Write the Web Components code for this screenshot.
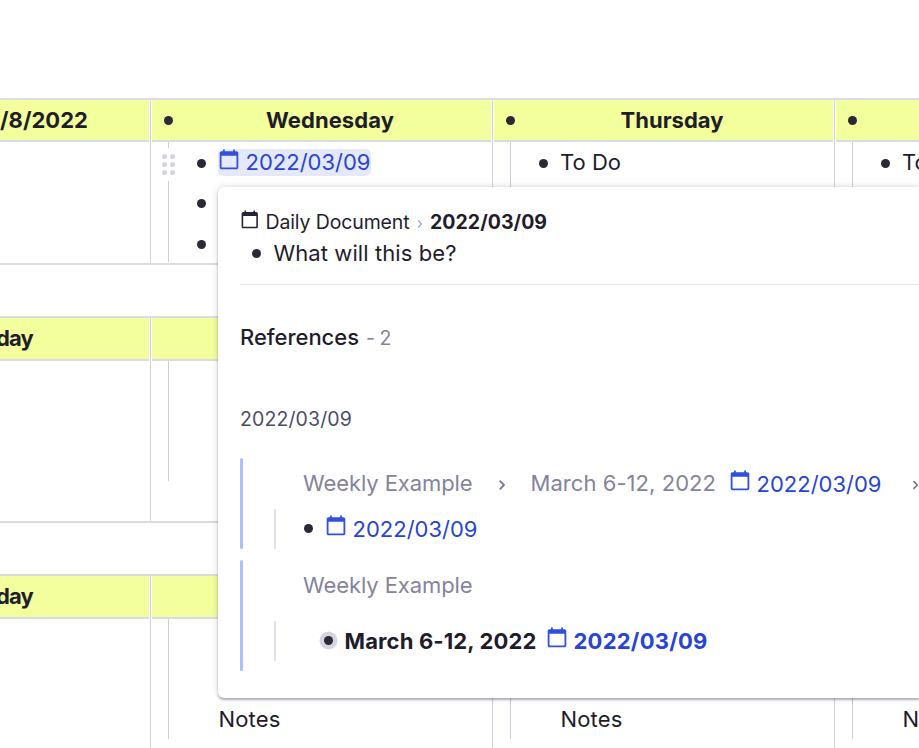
<!DOCTYPE html>
<html lang="en">
<head>
<meta charset="utf-8">
<title>Weekly Example</title>
<style>
html, body { margin: 0; background: #fff; }
body { width: 919px; height: 748px; overflow: hidden; position: relative; font-family: Inter, "Liberation Sans", sans-serif; color: #1f1d2b; }
</style>
</head>
<body>
<week-page></week-page>
<script>
const define = (name, html, setup) => {
  const tpl = document.createElement('template');
  tpl.innerHTML = html;
  customElements.define(name, class extends HTMLElement {
    constructor() {
      super();
      this.attachShadow({ mode: 'open' }).append(tpl.content.cloneNode(true));
    }
    connectedCallback() { if (setup) setup(this); }
  });
};

/* One line of text, tracked so that it fills its "w" width. */
define('text-run', `<style>
:host { display: block; flex: none; white-space: nowrap; font-size: 22px; line-height: 30px; }
:host([small]) { font-size: 19.5px; }
:host([bold]) { font-weight: 700; }
:host([medium]) { font-weight: 500; }
:host([muted]) { color: #85839c; }
:host([link]) { color: #2645d6; }
span { display: inline-block; }
</style><span><slot></slot></span>`, el => {
  const w = +el.getAttribute('w');
  if (!w) return;
  const span = el.shadowRoot.querySelector('span');
  const extra = (w - span.getBoundingClientRect().width) / el.textContent.length;
  span.style.letterSpacing = extra.toFixed(3) + 'px';
});

define('bullet-dot', `<style>
:host { display: block; flex: none; width: 9px; height: 9px; border-radius: 50%; background: #2a2935; }
:host([halo]) { box-shadow: 0 0 0 4.5px #d5d2e2; }
</style>`);

define('calendar-icon', `<style>
:host { display: block; flex: none; width: 20px; height: 21px; color: #2f50dc; }
:host([dark]) { width: 17.5px; height: 19px; color: #262432; }
svg { display: block; width: 100%; height: 100%; }
</style>
<svg viewBox="0 0 20 21" preserveAspectRatio="none"><path fill="currentColor" fill-rule="evenodd" d="M4 .6h1.800v1.700h8.400V.6H16v1.700h1.400c1 0 1.900.8 1.900 1.800v14.300c0 1-.8 1.900-1.900 1.900H2.600c-1 0-1.900-.8-1.900-1.900V4.100c0-1 .8-1.800 1.900-1.800H4zM2.500 6.700v11.200c0 .4.2.6.6.6h13.800c.4 0 .6-.2.6-.6V6.700z"/></svg>`);

define('chevron-sep', `<style>
:host { display: block; flex: none; width: 8px; height: 12px; color: #77758f; }
svg { display: block; width: 100%; height: 100%; }
:host([thin]) { width: 6px; height: 10px; color: #8a88a0; }
:host([thin]) path { stroke-width: 1.4; }
</style><svg viewBox="0 0 8 12"><path d="M1.700 1.600 6 6l-4.300 4.400" fill="none" stroke="currentColor" stroke-width="1.800"/></svg>`);

define('drag-handle', `<style>
:host { position: absolute; left: 8px; top: 48px; width: 19px; height: 33px; background: #fff; display: grid; grid-template-columns: 5px 5px; grid-auto-rows: 5px; gap: 3px; place-content: center; padding-right: 1px; box-sizing: border-box; }
i { border-radius: 50%; background: #d5d3e0; }
</style><i></i><i></i><i></i><i></i><i></i><i></i>`);

define('week-table', `<style>
:host { display: grid; grid-template-columns: 150px 342px 342px 85px; border-top: 2px solid #dbdbe1; border-bottom: 2px solid #dbdbdd; }
</style><slot></slot>`);

define('day-cell', `<style>
:host { display: flex; flex-direction: column; position: relative; border-left: 1px solid #d2d2d8; min-width: 0; height: var(--h); }
:host([first]) { border-left: 0; }
:host([last]) { overflow: hidden; }
:host([last]) header { margin-right: 0; }
header { display: flex; align-items: center; height: var(--head, 41px); margin: 0 1px; background: #f3ff9d; border-bottom: 2px solid #dadae2; flex: none; }
:host([first]) header { margin-left: 0; justify-content: flex-end; padding-right: var(--pad); }
::slotted([slot=dot]) { margin: 1px 0 0 12px; }
.title { flex: 1; display: flex; justify-content: center; margin: var(--lift, 0px) 0 0 -4px; }
:host([first]) .title { display: block; flex: none; margin: var(--lift, 0px) 0 0; }
.list { flex: none; box-sizing: border-box; height: 120px; padding-top: var(--drop, 0px); margin-left: 17px; border-left: 1px solid #cdccda; display: flex; flex-direction: column; }
:host([first]) .list { display: none; }
</style>
<header><slot name="dot"></slot><div class="title"><slot name="title"></slot></div></header>
<div class="list"><slot></slot></div>`);

define('list-row', `<style>
:host { display: flex; align-items: center; height: 40px; flex: none; padding-left: 28px; box-sizing: border-box; }
:host([plain]) { padding-left: 49.5px; }
:host([later]) { height: 41px; }
::slotted(text-run) { margin-left: 12px; margin-top: -2px; }
:host([plain]) ::slotted(text-run) { margin: 0; }
::slotted(ref-chip) { margin-left: 12px; margin-top: -2px; }
</style><slot></slot>`);

define('ref-chip', `<style>
:host { display: flex; align-items: center; box-sizing: border-box; width: 153px; height: 27px; border-radius: 5px; background: #e6e9fd; padding-left: 1px; }
calendar-icon { margin-top: -5px; margin-right: 6.500px; }
</style><calendar-icon></calendar-icon><slot></slot>`);

define('date-link', `<style>
:host { display: flex; align-items: center; flex: none; }
calendar-icon { margin-top: -6px; margin-right: 6.500px; }
</style><calendar-icon></calendar-icon><slot></slot>`);

define('ref-block', `<style>
:host { display: flex; box-sizing: border-box; height: var(--bh); }
.bar { flex: none; width: 3px; border-radius: 2px; background: #afbefd; }
.body { flex: 1; display: flex; flex-direction: column; justify-content: space-between; min-width: 0; padding-bottom: var(--foot, 0px); }
.path { display: flex; align-items: center; height: 51px; padding-left: 60px; }
.item { display: flex; align-items: center; height: 40px; margin-left: 31px; border-left: 2px solid #dfdfe8; padding-left: var(--in, 28px); }
</style><div class="bar"></div><div class="body"><div class="path"><slot name="path"></slot></div><div class="item"><slot></slot></div></div>`);

define('preview-popup', `<style>
:host { position: absolute; left: 218px; top: 187px; width: 701px; height: 511px; box-sizing: border-box; background: #fff; border-radius: 6px 0 0 6px; padding: 19px 0 0 22px; box-shadow: 0 2px 2px rgba(30,26,50,.28), 0 0 6px rgba(30,26,50,.2); display: flex; flex-direction: column; }
.crumb { display: flex; align-items: center; height: 32px; }
.crumb calendar-icon { margin: -6px 7px 0 1px; }
.crumb chevron-sep { margin: 3px 7.500px 0 7px; }
.line { display: flex; align-items: center; height: 30px; padding-left: 12px; }
.line text-run { margin-left: 12.500px; }
.line bullet-dot { margin-top: 1px; }
hr { margin: 16px 0 0; border: 0; height: 1px; flex: none; background: #e6e6ef; }
.refs { display: flex; align-items: center; height: 30px; margin-top: 37px; }
.refs text-run + text-run { margin: 2px 0 0 7px; }
.date { margin-top: 51.500px; height: 30px; color: #4d4b66; }
ref-block { margin-top: 24px; --bh: 91px; }
ref-block + ref-block { margin-top: 11px; --bh: 111px; --in: 48px; --foot: 10px; }
</style>
<div class="crumb"><calendar-icon dark></calendar-icon><text-run small w="144">Daily Document</text-run><chevron-sep thin></chevron-sep><text-run small bold w="117">2022/03/09</text-run></div>
<div class="line"><bullet-dot></bullet-dot><text-run w="183">What will this be?</text-run></div>
<hr>
<div class="refs"><text-run medium w="119">References</text-run><text-run small muted w="25">- 2</text-run></div>
<div class="date"><text-run small w="112">2022/03/09</text-run></div>
<ref-block>
  <text-run slot="path" muted w="169.5">Weekly Example</text-run>
  <chevron-sep slot="path" style="margin:3px 25px 0 25px"></chevron-sep>
  <text-run slot="path" muted w="185.5">March 6-12, 2022</text-run>
  <date-link slot="path" style="margin:1px 0 0 14px"><text-run link w="125">2022/03/09</text-run></date-link>
  <chevron-sep slot="path" style="margin:3px 0 0 30px;width:7px;overflow:hidden"></chevron-sep>
  <bullet-dot></bullet-dot>
  <date-link style="margin-left:13px"><text-run link w="125">2022/03/09</text-run></date-link>
</ref-block>
<ref-block>
  <text-run slot="path" muted w="169.5">Weekly Example</text-run>
  <bullet-dot halo></bullet-dot>
  <text-run bold w="192" style="margin-left:11.5px">March 6-12, 2022</text-run>
  <date-link style="margin-left:10.5px"><text-run link bold w="134">2022/03/09</text-run></date-link>
</ref-block>`);

define('week-page', `<style>
:host { display: block; box-sizing: border-box; height: 748px; padding-top: 98px; overflow: hidden; }
.w1 { --h: 163px; --head: 40px; --drop: 1px; --pad: 61px; }
.w2 { --h: 203px; --lift: -1px; --pad: 116px; margin-top: 51px; }
.w3 { --h: 200px; --lift: -1px; --pad: 116px; margin-top: 51px; }
</style>
<week-table class="w1">
  <day-cell first><text-run slot="title" bold w="88">/8/2022</text-run></day-cell>
  <day-cell><bullet-dot slot="dot"></bullet-dot><text-run slot="title" bold w="128">Wednesday</text-run>
    <list-row><bullet-dot></bullet-dot><ref-chip><text-run link w="125">2022/03/09</text-run></ref-chip></list-row>
    <list-row later><bullet-dot></bullet-dot></list-row>
    <list-row><bullet-dot></bullet-dot></list-row>
    <drag-handle></drag-handle></day-cell>
  <day-cell><bullet-dot slot="dot"></bullet-dot><text-run slot="title" bold w="103">Thursday</text-run>
    <list-row><bullet-dot></bullet-dot><text-run w="61">To Do</text-run></list-row></day-cell>
  <day-cell last><bullet-dot slot="dot"></bullet-dot>
    <list-row><bullet-dot></bullet-dot><text-run w="61">To Do</text-run></list-row></day-cell>
</week-table>
<week-table class="w2">
  <day-cell first><text-run slot="title" bold w="37">day</text-run></day-cell>
  <day-cell></day-cell><day-cell></day-cell><day-cell last></day-cell>
</week-table>
<week-table class="w3">
  <day-cell first><text-run slot="title" bold w="37">day</text-run></day-cell>
  <day-cell><list-row></list-row><list-row></list-row><list-row plain><text-run w="62">Notes</text-run></list-row></day-cell>
  <day-cell><list-row></list-row><list-row></list-row><list-row plain><text-run w="62">Notes</text-run></list-row></day-cell>
  <day-cell last><list-row></list-row><list-row></list-row><list-row plain><text-run w="62">Notes</text-run></list-row></day-cell>
</week-table>
<preview-popup></preview-popup>`);
</script>
</body>
</html>
